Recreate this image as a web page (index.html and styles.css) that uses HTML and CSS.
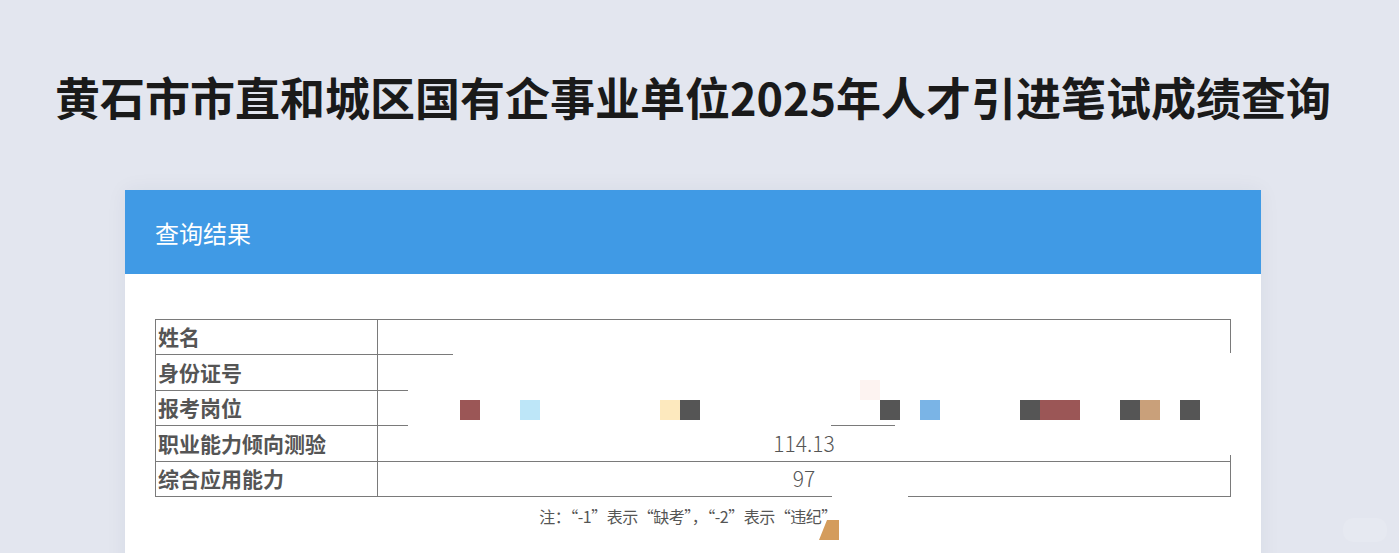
FILE: index.html
```html
<!DOCTYPE html>
<html lang="zh-CN">
<head>
<meta charset="utf-8">
<title>成绩查询</title>
<link rel="stylesheet" href="styles.css">
</head>
<body>
<div class="page">
  <h1 class="title">黄石市市直和城区国有企事业单位2025年人才引进笔试成绩查询</h1>
  <section class="card">
    <header class="card-head">查询结果</header>
    <div class="card-body">
      <div class="result">
        <table class="score-table">
          <colgroup><col class="col-label"><col></colgroup>
          <tr><th>姓名</th><td></td></tr>
          <tr><th>身份证号</th><td></td></tr>
          <tr><th>报考岗位</th><td></td></tr>
          <tr><th>职业能力倾向测验</th><td>114.13</td></tr>
          <tr><th>综合应用能力</th><td>97</td></tr>
        </table>
        <p class="note">注：“-1”表示“缺考”，“-2”表示“违纪”</p>
        <div class="redact" aria-hidden="true">
          <span class="wipe w-a"></span>
          <span class="wipe w-b"></span>
          <span class="wipe w-c"></span>
          <span class="wipe w-d"></span>
          <span class="wipe w-e"></span>
          <span class="px p1"></span>
          <span class="px p2"></span>
          <span class="px p3"></span>
          <span class="px p4"></span>
          <span class="px p5"></span>
          <span class="px p6"></span>
          <span class="px p7"></span>
          <span class="px p8"></span>
          <span class="px p9"></span>
          <span class="px p10"></span>
          <span class="px p11"></span>
          <span class="px p12"></span>
          <span class="px p13"></span>
        </div>
      </div>
    </div>
  </section>
</div>
<div class="float-btn"></div>
</body>
</html>
```

FILE: styles.css
```css
html, body {
  margin: 0;
  padding: 0;
}
body {
  background: #e3e6ef;
  font-family: "Noto Sans CJK SC", "Microsoft YaHei", "Noto Sans", sans-serif;
  height: 553px;
  overflow: hidden;
}
.page {
  width: 1136px;
  margin-left: 125px;
}
.title {
  display: flex;
  justify-content: center;
  white-space: nowrap;
  margin: 67px 0 0;
  font-size: 45px;
  line-height: 60px;
  font-weight: 700;
  color: #1a1a1a;
}
.card {
  margin-top: 63px;
  background: #fff;
  height: 420px;
  box-shadow: 0 0 20px rgba(40, 50, 80, 0.06);
}
.card-head {
  height: 84px;
  background: #409ae5;
  color: #fff;
  font-size: 24px;
  font-weight: 400;
  padding-left: 30px;
  display: flex;
  align-items: center;
}
.card-body {
  padding: 45px 30px 0;
}
.result {
  position: relative;
  width: 1076px;
}
.score-table {
  width: 1076px;
  border-collapse: collapse;
  table-layout: fixed;
}
.col-label {
  width: 222px;
}
.score-table tr {
  height: 35px;
}
.score-table tr:nth-child(even) {
  height: 36px;
}
.score-table th,
.score-table td {
  border: 1px solid #7a7a7a;
  padding: 0 2px 2px;
  vertical-align: middle;
}
.score-table th {
  text-align: left;
  font-size: 21px;
  font-weight: 700;
  color: #555;
}
.score-table td {
  text-align: center;
  font-size: 21px;
  font-weight: 300;
  color: #555;
}
.note {
  margin: 7px 0 0;
  padding-right: 10px;
  text-align: center;
  font-size: 16px;
  line-height: 24px;
  letter-spacing: -0.5px;
  color: #555;
}
.redact span {
  position: absolute;
  display: block;
}
.wipe { background: #fff; }
.w-a { left: 298px; top: 34px; width: 781px; height: 36px; }
.w-b { left: 253px; top: 70px; width: 826px; height: 35px; }
.w-c { left: 253px; top: 105px; width: 423px; height: 3px; }
.w-d { left: 740px; top: 105px; width: 339px; height: 31px; }
.w-e { left: 677px; top: 176px; width: 76px; height: 3px; }
.px { top: 81px; width: 20px; height: 20px; }
.p1 { left: 305px; background: #9b5656; }
.p2 { left: 365px; background: #bde6f8; }
.p3 { left: 505px; background: #fde9be; }
.p4 { left: 525px; background: #555; }
.p5 { left: 725px; background: #555; }
.p6 { left: 765px; background: #7ab4e6; }
.p7 { left: 865px; background: #555; }
.p8 { left: 885px; width: 40px; background: #9b5656; }
.p9 { left: 965px; background: #555; }
.p10 { left: 985px; background: #c9a07a; }
.p11 { left: 1025px; background: #555; }
.p12 { left: 705px; top: 61px; background: #fdf3f1; }
.p13 {
  left: 664px;
  top: 201px;
  background: #d49c5c;
  clip-path: polygon(40% 0, 100% 0, 100% 100%, 0 100%);
}
.float-btn {
  position: fixed;
  right: 12px;
  bottom: 11px;
  width: 44px;
  height: 24px;
  border-radius: 10px;
  background: rgba(255, 255, 255, 0.12);
}
```
